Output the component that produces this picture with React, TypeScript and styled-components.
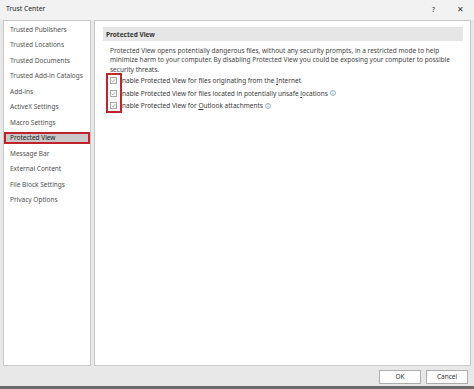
import React from 'react';
import styled, { createGlobalStyle } from 'styled-components';

const NAV = [
  'Trusted Publishers',
  'Trusted Locations',
  'Trusted Documents',
  'Trusted Add-in Catalogs',
  'Add-ins',
  'ActiveX Settings',
  'Macro Settings',
  'Protected View',
  'Message Bar',
  'External Content',
  'File Block Settings',
  'Privacy Options',
];

const GlobalStyle = createGlobalStyle`
  html, body {
    margin: 0;
    padding: 0;
    background: #e8e8e8;
  }
  body {
    font-family: "Noto Sans", "Open Sans", sans-serif;
    font-size: 6.5px;
    color: #444;
  }
`;

const InfoIcon = () => (
  <svg width="6" height="6" viewBox="0 0 12 12" style={{ marginLeft: 2 }}>
    <circle cx="6" cy="6" r="5" fill="none" stroke="#5b7fb0" strokeWidth="1.2" />
    <rect x="5.4" y="5" width="1.2" height="4" fill="#5b7fb0" />
    <rect x="5.4" y="3" width="1.2" height="1.2" fill="#5b7fb0" />
  </svg>
);

const Check = () => (
  <svg width="7" height="7" viewBox="0 0 12 12">
    <path d="M1.8 6.4 L4.7 9.4 L10.4 2.4" fill="none" stroke="#666" strokeWidth="1.3" />
  </svg>
);

export default function App() {
  return (
    <>
      <GlobalStyle />
      <Dialog>
        <TitleBar>
          <Title>Trust Center</Title>
          <TitleButtons>
            <span>?</span>
            <Close>✕</Close>
          </TitleButtons>
        </TitleBar>
        <Body>
          <Nav>
            {NAV.map((n) => (
              <NavItem key={n} $active={n === 'Protected View'}>
                {n}
              </NavItem>
            ))}
          </Nav>
          <Main>
            <SectionHeader>Protected View</SectionHeader>
            <Paragraph>
              Protected View opens potentially dangerous files, without any security prompts, in a restricted mode to help
              minimize harm to your computer. By disabling Protected View you could be exposing your computer to possible
              security threats.
            </Paragraph>
            <Options>
              <Option>
                <Box>
                  <Check />
                </Box>
                <span>
                  nable Protected View for files originating from the <u>I</u>nternet
                </span>
              </Option>
              <Option>
                <Box>
                  <Check />
                </Box>
                <span>
                  nable Protected View for files located in potentially unsafe <u>l</u>ocations
                </span>
                <InfoIcon />
              </Option>
              <Option>
                <Box>
                  <Check />
                </Box>
                <span>
                  nable Protected View for <u>O</u>utlook attachments
                </span>
                <InfoIcon />
              </Option>
              <Highlight />
            </Options>
          </Main>
        </Body>
        <Footer>
          <Button>OK</Button>
          <Button>Cancel</Button>
        </Footer>
        <Strip />
      </Dialog>
    </>
  );
}

const Dialog = styled.div`
  width: 474px;
  height: 389px;
  display: flex;
  flex-direction: column;
  background: #e8e8e8;
  overflow: hidden;
`;

const TitleBar = styled.div`
  height: 20px;
  flex: none;
  display: flex;
  align-items: center;
  justify-content: space-between;
  padding: 0 10px 3px 6px;
  box-sizing: border-box;
  background: #f2f2f2;
  color: #222;
`;

const Title = styled.div`
  font-size: 6.8px;
`;

const TitleButtons = styled.div`
  display: flex;
  align-items: center;
  gap: 22px;
  font-size: 7.5px;
  color: #333;
`;

const Close = styled.span`
  font-size: 8px;
`;

const Body = styled.div`
  flex: 1;
  display: flex;
  gap: 3px;
  padding: 0 3px 0 3px;
  min-height: 0;
`;

const Panel = styled.div`
  background: #fff;
  border: 1px solid #c8c8c8;
  box-sizing: border-box;
`;

const Nav = styled(Panel)`
  width: 88px;
  flex: none;
  padding-top: 0.5px;
`;

const NavItem = styled.div<{ $active?: boolean }>`
  display: flex;
  align-items: center;
  box-sizing: border-box;
  height: ${(p) => (p.$active ? '12.5px' : '15.5px')};
  margin: ${(p) => (p.$active ? '1.5px 0' : '0')};
  padding-left: ${(p) => (p.$active ? '4px' : '6px')};
  background: ${(p) => (p.$active ? '#c9c9c9' : 'transparent')};
  border: ${(p) => (p.$active ? '2px solid #c0242b' : 'none')};
  color: ${(p) => (p.$active ? '#222' : '#505050')};
  white-space: nowrap;
`;

const Main = styled(Panel)`
  flex: 1;
  padding: 6px 7px 0 8px;
`;

const SectionHeader = styled.div`
  height: 14px;
  display: flex;
  align-items: center;
  padding-left: 3px;
  background: #e6e6e6;
  font-weight: 700;
  color: #333;
`;

const Paragraph = styled.p`
  margin: 5px 0 0 7px;
  line-height: 9.4px;
  color: #444;
`;

const Options = styled.div`
  position: relative;
  margin: 0 0 0 7px;
  padding-top: 0.5px;
`;

const Option = styled.div`
  display: flex;
  align-items: center;
  height: 12.5px;
  white-space: nowrap;
  color: #3a3a3a;
`;

const Box = styled.div`
  width: 7px;
  height: 7px;
  box-sizing: border-box;
  border: 1px solid #a8a8a8;
  display: flex;
  align-items: center;
  justify-content: center;
  margin-right: 5px;
  background: #fff;
`;

const Highlight = styled.div`
  position: absolute;
  left: -4px;
  top: -1px;
  width: 16px;
  height: 40px;
  box-sizing: border-box;
  border: 2px solid #c0242b;
`;

const Footer = styled.div`
  height: 20px;
  flex: none;
  display: flex;
  justify-content: flex-end;
  align-items: center;
  gap: 5px;
  padding: 1px 6px 0 0;
  box-sizing: border-box;
`;

const Button = styled.div`
  width: 42px;
  height: 14px;
  box-sizing: border-box;
  display: flex;
  align-items: center;
  justify-content: center;
  background: #fdfdfd;
  border: 1px solid #adadad;
  color: #333;
`;

const Strip = styled.div`
  height: 3px;
  flex: none;
  background: #6b6b6b;
`;
